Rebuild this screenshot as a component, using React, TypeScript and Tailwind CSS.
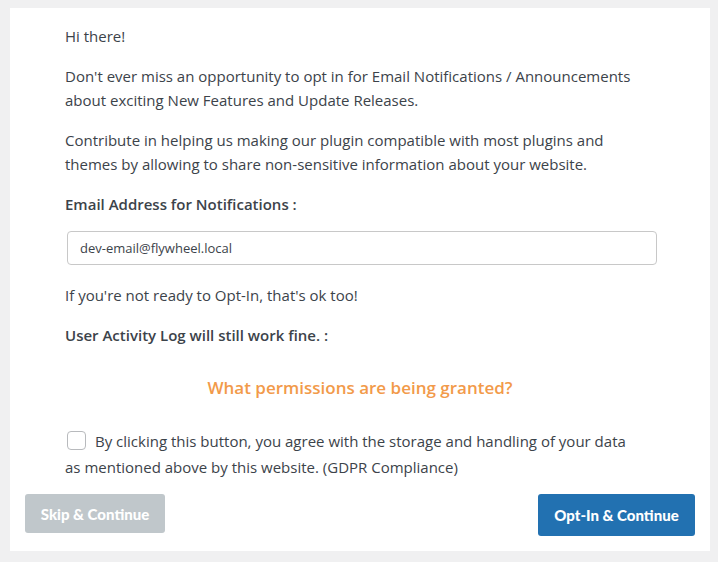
import React, { useState } from 'react';

const bodyFont = "font-['Open_Sans',_'Noto_Sans',_sans-serif]";

export default function App() {
  const [email, setEmail] = useState('dev-email@flywheel.local');
  const [agreed, setAgreed] = useState(false);

  return (
    <div className={`min-h-[562px] w-full bg-[#f0f0f1] pt-[8px] pr-[8px] pb-[11px] pl-[10px] ${bodyFont}`}>
      <div className="flex flex-col bg-white px-[15px] pt-[16px] pb-[15px] text-[15px] leading-[24px] text-[#3c434a]">
        <div className="flex flex-col px-[40px]">
          <p>Hi there!</p>
          <p className="mt-[16px]">
            Don't ever miss an opportunity to opt in for Email Notifications / Announcements about exciting New
            Features and Update Releases.
          </p>
          <p className="mt-[16px]">
            Contribute in helping us making our plugin compatible with most plugins and themes by allowing to share
            non-sensitive information about your website.
          </p>
          <p className="mt-[16px] font-semibold">Email Address for Notifications :</p>
          <input
            type="email"
            value={email}
            onChange={(event) => setEmail(event.target.value)}
            className="mt-[15px] ml-[2px] h-[34px] w-[590px] rounded-[4px] border border-[#c8c8c8] bg-white px-[12px] text-[13px] text-[#3c434a] outline-none"
          />
          <p className="mt-[18px]">If you're not ready to Opt-In, that's ok too!</p>
          <p className="mt-[16px] font-semibold">User Activity Log will still work fine. :</p>
          <h3 className="mt-[29px] text-center text-[17px] leading-[24px] font-semibold text-[#f29a4a]">
            What permissions are being granted?
          </h3>
          <label className="mt-[28px] block pr-[12px] leading-[26px]">
            <input
              type="checkbox"
              checked={agreed}
              onChange={(event) => setAgreed(event.target.checked)}
              className="relative top-[3px] mr-[9px] ml-[2px] inline-block h-[19px] w-[19px] appearance-none rounded-[4px] border border-[#b8babd] bg-white align-baseline"
            />
            By clicking this button, you agree with the storage and handling of your data as mentioned above by this
            website. (GDPR Compliance)
          </label>
        </div>

        <div className="mt-[14px] flex items-start justify-between">
          <button
            type="button"
            className="h-[39px] w-[140px] rounded-[3px] bg-[#c0c7cb] font-['Lato',_sans-serif] text-[15px] font-black text-white"
          >
            Skip &amp; Continue
          </button>
          <button
            type="button"
            className="h-[42px] w-[157px] rounded-[3px] bg-[#2271b1] font-['Lato',_sans-serif] text-[15px] font-black text-white"
          >
            Opt-In &amp; Continue
          </button>
        </div>
      </div>
    </div>
  );
}
